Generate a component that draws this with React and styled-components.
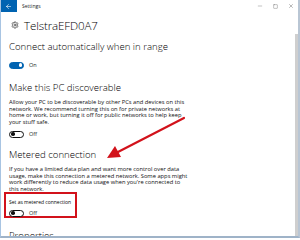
import React from 'react';
import styled, { createGlobalStyle } from 'styled-components';
import { ArrowLeft, Settings as Gear, Minus, Square, X } from 'lucide-react';

const GlobalStyle = createGlobalStyle`
    body {
        margin: 0;
        background: #fff;
        overflow: hidden;
        font-family: "Open Sans", "Noto Sans", sans-serif;
        color: #000;
    }
`;

const App = () => {
    return (
        <>
            <GlobalStyle />
            <Window>
                <TitleBar>
                    <BackButton><ArrowLeft size={7} strokeWidth={2} /></BackButton>
                    <Title>Settings</Title>
                    <Controls>
                        <Minus size={6} strokeWidth={1.2} />
                        <Square size={5} strokeWidth={1.4} />
                        <X size={6} strokeWidth={1.4} />
                    </Controls>
                </TitleBar>
                <Body>
                    <Content>
                        <NetworkName>
                            <Gear size={8} strokeWidth={2.6} color="#555" />
                            TelstraEFD0A7
                        </NetworkName>
                        <Heading $top={9}>Connect automatically when in range</Heading>
                        <ToggleRow $top={8}>
                            <Toggle $on><Knob $on /></Toggle>
                            <State>On</State>
                        </ToggleRow>
                        <Heading $top={13}>Make this PC discoverable</Heading>
                        <Para>
                            Allow your PC to be discoverable by other PCs and devices on this<br />
                            network. We recommend turning this on for private networks at<br />
                            home or work, but turning it off for public networks to help keep<br />
                            your stuff safe.
                        </Para>
                        <ToggleRow $top={5}>
                            <Toggle><Knob /></Toggle>
                            <State>Off</State>
                        </ToggleRow>
                        <Heading $top={11}>Metered connection</Heading>
                        <Para>
                            If you have a limited data plan and want more control over data<br />
                            usage, make this connection a metered network. Some apps might<br />
                            work differently to reduce data usage when you're connected to<br />
                            this network.
                        </Para>
                        <Highlight>
                            <Label>Set as metered connection</Label>
                            <ToggleRow $top={4}>
                                <Toggle><Knob /></Toggle>
                                <State>Off</State>
                            </ToggleRow>
                        </Highlight>
                        <Heading $top={12}>Properties</Heading>
                    </Content>
                    <Scrollbar />
                </Body>
                <Pointer viewBox="0 0 300 240">
                    <line x1="184" y1="118" x2="116" y2="153" stroke="#d2121b" strokeWidth="2.2" strokeLinecap="round" />
                    <polygon points="107,158 121,157 115,146" fill="#d2121b" />
                </Pointer>
            </Window>
        </>
    );
};

const Window = styled.div`
    position: relative;
    width: 300px;
    height: 238px;
    box-sizing: border-box;
    border-left: 1px solid #a8c4e2;
    border-right: 2px solid #b9c6d4;
    border-bottom: 2px solid #9fb3c8;
    overflow: hidden;
    display: flex;
    flex-direction: column;
`;

const TitleBar = styled.div`
    display: flex;
    align-items: center;
    height: 12px;
    flex-shrink: 0;
`;

const BackButton = styled.div`
    width: 17px;
    height: 12px;
    margin-left: -1px;
    background: #0063b1;
    color: #fff;
    display: flex;
    align-items: center;
    justify-content: center;
`;

const Title = styled.span`
    margin-left: 5px;
    font-size: 5px;
    color: #222;
`;

const Controls = styled.div`
    margin-left: auto;
    margin-right: 4px;
    display: flex;
    align-items: center;
    gap: 10px;
    color: #333;
`;

const Body = styled.div`
    flex: 1;
    display: flex;
    min-height: 0;
`;

const Content = styled.div`
    flex: 1;
    padding-left: 8px;
`;

const NetworkName = styled.div`
    margin-top: 6px;
    display: flex;
    align-items: center;
    gap: 5px;
    margin-left: 2px;
    height: 14px;
    font-size: 11.5px;
    font-weight: 300;
    letter-spacing: -0.1px;
`;

const Heading = styled.div`
    margin-top: ${p => p.$top}px;
    height: 12px;
    line-height: 12px;
    font-size: 9.6px;
    font-weight: 300;
    white-space: nowrap;
`;

const Para = styled.p`
    margin: 5px 0 0;
    font-size: 5.75px;
    line-height: 6.5px;
    white-space: nowrap;
    color: #111;
`;

const ToggleRow = styled.div`
    margin-top: ${p => p.$top}px;
    display: flex;
    align-items: center;
    gap: 5px;
`;

const Toggle = styled.div`
    width: 15px;
    height: 7px;
    box-sizing: border-box;
    border-radius: 4px;
    border: 1px solid ${p => (p.$on ? '#0063b1' : '#111')};
    background: ${p => (p.$on ? '#0063b1' : '#fff')};
    display: flex;
    align-items: center;
    justify-content: ${p => (p.$on ? 'flex-end' : 'flex-start')};
    padding: 0 1px;
`;

const Knob = styled.div`
    width: 3.5px;
    height: 3.5px;
    border-radius: 50%;
    background: ${p => (p.$on ? '#fff' : '#111')};
`;

const State = styled.span`
    font-size: 5.5px;
    color: #222;
`;

const Highlight = styled.div`
    margin: 0 0 0 -5px;
    width: 73px;
    height: 26px;
    box-sizing: border-box;
    border: 2px solid #d2121b;
    padding: 5px 0 0 3px;
`;

const Label = styled.div`
    font-size: 5px;
    line-height: 6px;
    white-space: nowrap;
`;

const Scrollbar = styled.div`
    width: 3px;
    margin-top: 22px;
    background: #cfcfcf;
`;

const Pointer = styled.svg`
    position: absolute;
    left: -1px;
    top: 0;
    width: 300px;
    height: 240px;
    pointer-events: none;
`;

export default App;
